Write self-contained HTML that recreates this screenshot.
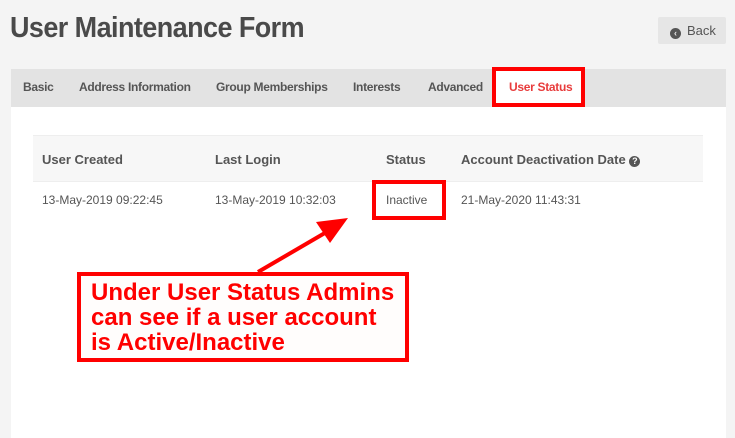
<!DOCTYPE html>
<html><head><style>
body{margin:0;width:735px;height:438px;background:#f4f4f4;font-family:"Liberation Sans",sans-serif;position:relative;overflow:hidden;color:#444}
.a{position:absolute}
h1{position:absolute;left:10px;top:12px;margin:0;font-size:29px;font-weight:bold;color:#4a4a4a;letter-spacing:-0.6px;transform:scaleX(0.93);transform-origin:left}
.tab{position:absolute;top:80px;font-size:12px;color:#555;font-weight:bold;letter-spacing:-0.3px}
</style></head><body>
<h1>User Maintenance Form</h1>
<div class="a" style="left:658px;top:17px;width:68px;height:27px;background:#e6e6e6;border-radius:2px;font-size:13px;color:#555;line-height:27px">
<span style="display:inline-block;width:11px;height:11px;border-radius:50%;background:#555;color:#e6e6e6;font-size:9px;line-height:11px;text-align:center;margin:0 6px 0 12px;vertical-align:-1px;font-weight:bold">‹</span>Back</div>
<div class="a" style="left:11px;top:69px;width:715px;height:38px;background:#e3e3e3"></div>
<div class="a" style="left:11px;top:107px;width:715px;height:331px;background:#fff"></div>
<div class="tab" style="left:23px">Basic</div>
<div class="tab" style="left:79px">Address Information</div>
<div class="tab" style="left:216px">Group Memberships</div>
<div class="tab" style="left:353px">Interests</div>
<div class="tab" style="left:428px">Advanced</div>
<div class="a" style="left:492px;top:67px;width:85px;height:32px;border:4px solid #f00;background:#fff"></div>
<div class="tab" style="left:509px;color:#e83c3c">User Status</div>
<div class="a" style="left:33px;top:135px;width:670px;height:45px;background:#f7f7f7;border-top:1px solid #eee;border-bottom:1px solid #eee"></div>
<div class="a" style="top:152px;left:42px;font-size:13px;font-weight:bold;color:#555">User Created</div>
<div class="a" style="top:152px;left:215px;font-size:13px;font-weight:bold;color:#555">Last Login</div>
<div class="a" style="top:152px;left:386px;font-size:13px;font-weight:bold;color:#555">Status</div>
<div class="a" style="top:152px;left:461px;font-size:13px;font-weight:bold;color:#555">Account Deactivation Date <span style="display:inline-block;width:11px;height:11px;border-radius:50%;background:#555;color:#fff;font-size:9px;line-height:11px;text-align:center">?</span></div>
<div class="a" style="top:193px;left:42px;font-size:12px;color:#555">13-May-2019 09:22:45</div>
<div class="a" style="top:193px;left:215px;font-size:12px;color:#555">13-May-2019 10:32:03</div>
<div class="a" style="left:372px;top:180px;width:66px;height:32px;border:4px solid #f00;background:#fff"></div>
<div class="a" style="top:193px;left:386px;font-size:12px;color:#555">Inactive</div>
<div class="a" style="top:193px;left:461px;font-size:12px;color:#555">21-May-2020 11:43:31</div>
<svg class="a" style="left:0;top:0" width="735" height="438"><line x1="258" y1="272" x2="330" y2="230" stroke="#f00" stroke-width="4"/><polygon points="348,218 316,222 330,243" fill="#f00"/></svg>
<div class="a" style="left:77px;top:272px;width:324px;height:82px;border:4px solid #f00;background:#fffdfc"></div>
<div class="a" style="left:91px;top:280px;font-size:24px;line-height:25px;font-weight:bold;color:#f00">Under User Status Admins<br>can see if a user account<br>is Active/Inactive</div>
</body></html>
